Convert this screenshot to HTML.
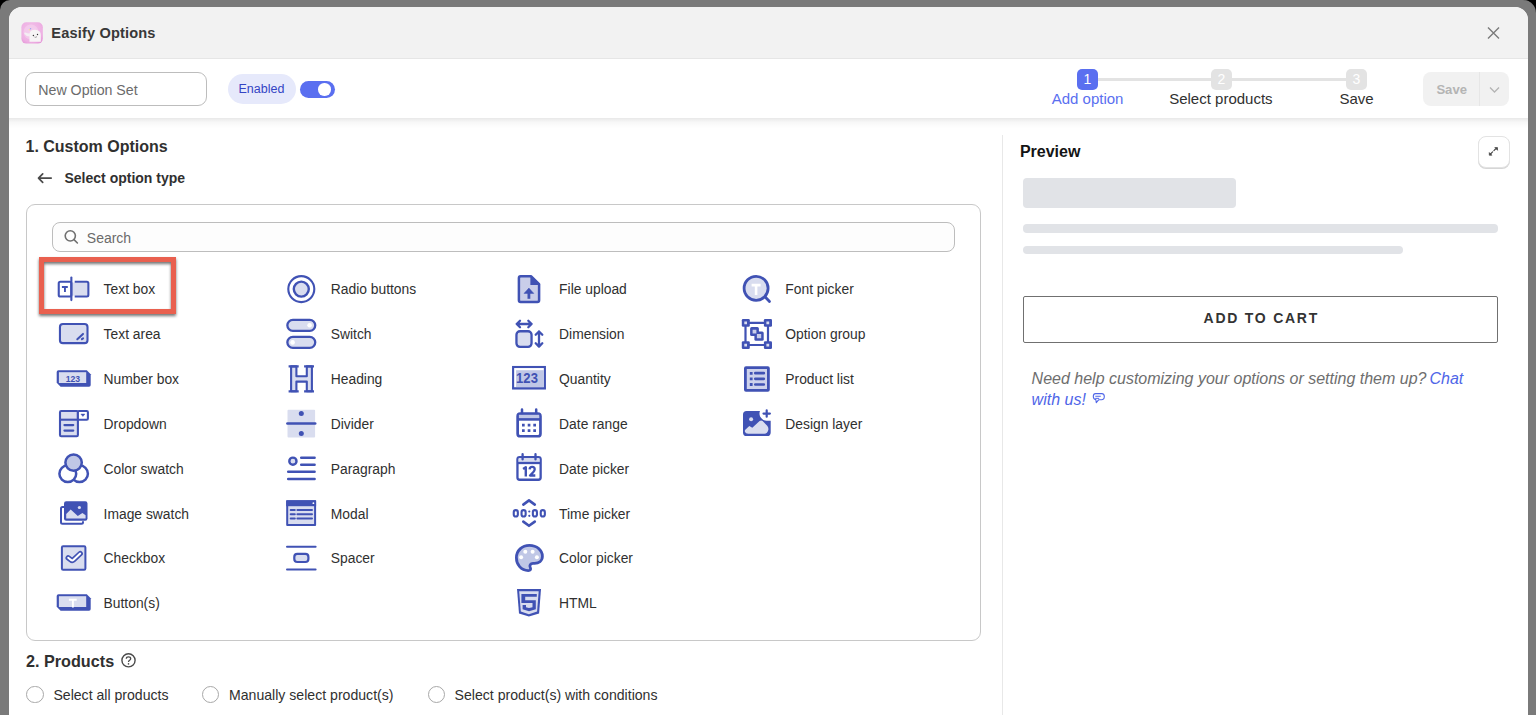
<!DOCTYPE html><html><head><meta charset="utf-8"><style>
html,body{margin:0;padding:0;width:1536px;height:715px;overflow:hidden;background:#000;font-family:"Liberation Sans",sans-serif;}
.t{position:absolute;white-space:nowrap;line-height:1;}
.a{position:absolute;box-sizing:border-box;}
</style></head><body>
<div class="a" style="left:0;top:0;width:1536px;height:715px;background:#7a7a7a;border-radius:10px 13px 0 0;"></div>
<div class="a" style="left:8.5px;top:7px;width:1519px;height:720px;background:#fff;border-radius:13px 13px 0 0;overflow:hidden;"></div>
<div class="a" style="left:8.5px;top:7px;width:1519px;height:52px;background:#f2f2f2;border-radius:13px 13px 0 0;border-bottom:1px solid #e6e6e6;"></div>
<svg class="a" style="left:0;top:0;z-index:1" width="80" height="60"><defs><radialGradient id="lg" cx="0.45" cy="0.4" r="0.7"><stop offset="0" stop-color="#f3c6ec"/><stop offset="0.75" stop-color="#eeb0e3"/><stop offset="1" stop-color="#e596d8"/></radialGradient></defs><rect x="21.4" y="22.2" width="21.4" height="21.4" rx="5" fill="url(#lg)"/><circle cx="31" cy="32" r="7.5" fill="#f5d3ef" opacity="0.6"/><path d="M29.5 41.8 V34 Q30 29.8 35 29.8 Q40.8 30 40.8 35 V41.8 Z" fill="#f7f4f6"/><path d="M29.8 36.5 Q26 36.6 24.3 33.8 Q24 32.4 25.4 32.6 Q27.5 33.6 30 33.5 Z" fill="#f4eef3"/><circle cx="33.4" cy="35.5" r="0.7" fill="#333"/><circle cx="37.5" cy="34.5" r="0.7" fill="#333"/><path d="M34.5 37 Q35.8 37.8 37 36.6" stroke="#444" stroke-width="0.5" fill="none"/><circle cx="30.5" cy="28.8" r="0.8" fill="#9fa8f0"/><circle cx="29.4" cy="29.8" r="0.7" fill="#f3e0a0"/></svg>
<div class="t" style="left:51.30px;top:25.54px;font-size:14.6px;color:#383838;font-weight:bold;font-style:normal;letter-spacing:0.15px;">Easify Options</div>
<svg class="a" style="left:0;top:0" width="1536" height="715"><path d="M1488 27.5 L1499 38.5 M1499 27.5 L1488 38.5" stroke="#7a7a7a" stroke-width="1.4" fill="none"/></svg>
<div class="a" style="left:8.5px;top:60px;width:1519px;height:58px;background:#fff;z-index:2"></div>
<div class="a" style="left:25px;top:72px;width:182px;height:34px;border:1px solid #bdbdbd;border-radius:9px;background:#fff;z-index:3"></div>
<div style="position:absolute;z-index:4;left:0;top:0"><div class="t" style="left:38.30px;top:83.38px;font-size:14.2px;color:#6b6b6b;font-weight:normal;font-style:normal;">New Option Set</div>
<div class="a" style="left:227.7px;top:74px;width:68px;height:30px;border-radius:15px;background:#e6e9fb;"></div>
<div class="t" style="left:238.50px;top:83.22px;font-size:12.5px;color:#3444c4;font-weight:normal;font-style:normal;">Enabled</div>
<div class="a" style="left:300px;top:80.5px;width:34.5px;height:17px;border-radius:9px;background:#5a6ff0;"></div>
<div class="a" style="left:318px;top:83px;width:12.5px;height:12.5px;border-radius:50%;background:#fff;"></div>
<div class="a" style="left:1087px;top:77.5px;width:270px;height:3px;background:#e3e3e3;"></div>
<div class="a" style="left:1077px;top:69px;width:21px;height:21px;border-radius:5px;background:#5a6ff0;color:#fff;font-size:14px;line-height:21px;text-align:center;">1</div>
<div class="a" style="left:1211px;top:69px;width:21px;height:21px;border-radius:5px;background:#e3e3e3;color:#fff;font-size:14px;line-height:21px;text-align:center;">2</div>
<div class="a" style="left:1346px;top:69px;width:21px;height:21px;border-radius:5px;background:#e3e3e3;color:#fff;font-size:14px;line-height:21px;text-align:center;">3</div>
<div class="t" style="left:1051.70px;top:91.30px;font-size:15px;color:#5a6ff0;font-weight:normal;font-style:normal;">Add option</div>
<div class="t" style="left:1169.20px;top:91.30px;font-size:15px;color:#303030;font-weight:normal;font-style:normal;">Select products</div>
<div class="t" style="left:1339.50px;top:91.30px;font-size:15px;color:#303030;font-weight:normal;font-style:normal;">Save</div>
<div class="a" style="left:1423px;top:72px;width:86px;height:34px;border-radius:8px;background:#f1f1f1;"></div>
<div class="a" style="left:1478.5px;top:72px;width:1px;height:34px;background:#e6e6e6;"></div>
<div class="t" style="left:1436.40px;top:82.91px;font-size:13.1px;color:#b4b4b4;font-weight:bold;font-style:normal;">Save</div>
<svg class="a" style="left:1489px;top:86px" width="12" height="8"><path d="M1 1.5 L5.5 6 L10 1.5" stroke="#b4b4b4" stroke-width="1.3" fill="none"/></svg>
</div><div class="a" style="left:8.5px;top:118px;width:1519px;height:10px;background:linear-gradient(rgba(0,0,0,0.09),rgba(0,0,0,0.03) 40%,rgba(0,0,0,0));z-index:2"></div>
<div class="a" style="left:1002px;top:135px;width:1px;height:600px;background:#e8e8e8;"></div>
<div class="t" style="left:25.50px;top:138.56px;font-size:16px;color:#303030;font-weight:bold;font-style:normal;">1. Custom Options</div>
<svg class="a" style="left:36px;top:170px" width="18" height="16"><path d="M2.6 8.1 H15.2 M6.7 3.8 L2.5 8.1 L6.7 12.4" stroke="#4a4a4a" stroke-width="1.7" fill="none" stroke-linecap="round" stroke-linejoin="round"/></svg>
<div class="t" style="left:64.50px;top:171.15px;font-size:14px;color:#303030;font-weight:bold;font-style:normal;">Select option type</div>
<div class="a" style="left:25.5px;top:204px;width:955px;height:437px;border:1px solid #c8c8c8;border-radius:9px;"></div>
<div class="a" style="left:52px;top:222px;width:903px;height:30px;border:1px solid #bdbdbd;border-radius:8px;background:#fdfdfd;"></div>
<svg class="a" style="left:62px;top:228px" width="20" height="20"><circle cx="8.3" cy="7.85" r="5.1" stroke="#707070" stroke-width="1.6" fill="none"/><path d="M12 11.6 L15.4 15" stroke="#707070" stroke-width="1.6" stroke-linecap="round"/></svg>
<div class="t" style="left:86.80px;top:231.15px;font-size:14px;color:#6b6b6b;font-weight:normal;font-style:normal;">Search</div>
<div class="t" style="left:103.60px;top:283.28px;font-size:13.85px;color:#303030;font-weight:normal;font-style:normal;">Text box</div>
<div class="t" style="left:103.60px;top:328.14px;font-size:13.85px;color:#303030;font-weight:normal;font-style:normal;">Text area</div>
<div class="t" style="left:103.60px;top:373.00px;font-size:13.85px;color:#303030;font-weight:normal;font-style:normal;">Number box</div>
<div class="t" style="left:103.60px;top:417.86px;font-size:13.85px;color:#303030;font-weight:normal;font-style:normal;">Dropdown</div>
<div class="t" style="left:103.60px;top:462.72px;font-size:13.85px;color:#303030;font-weight:normal;font-style:normal;">Color swatch</div>
<div class="t" style="left:103.60px;top:507.58px;font-size:13.85px;color:#303030;font-weight:normal;font-style:normal;">Image swatch</div>
<div class="t" style="left:103.60px;top:552.44px;font-size:13.85px;color:#303030;font-weight:normal;font-style:normal;">Checkbox</div>
<div class="t" style="left:103.60px;top:597.30px;font-size:13.85px;color:#303030;font-weight:normal;font-style:normal;">Button(s)</div>
<div class="t" style="left:330.75px;top:283.28px;font-size:13.85px;color:#303030;font-weight:normal;font-style:normal;">Radio buttons</div>
<div class="t" style="left:330.75px;top:328.14px;font-size:13.85px;color:#303030;font-weight:normal;font-style:normal;">Switch</div>
<div class="t" style="left:330.75px;top:373.00px;font-size:13.85px;color:#303030;font-weight:normal;font-style:normal;">Heading</div>
<div class="t" style="left:330.75px;top:417.86px;font-size:13.85px;color:#303030;font-weight:normal;font-style:normal;">Divider</div>
<div class="t" style="left:330.75px;top:462.72px;font-size:13.85px;color:#303030;font-weight:normal;font-style:normal;">Paragraph</div>
<div class="t" style="left:330.75px;top:507.58px;font-size:13.85px;color:#303030;font-weight:normal;font-style:normal;">Modal</div>
<div class="t" style="left:330.75px;top:552.44px;font-size:13.85px;color:#303030;font-weight:normal;font-style:normal;">Spacer</div>
<div class="t" style="left:559.10px;top:283.28px;font-size:13.85px;color:#303030;font-weight:normal;font-style:normal;">File upload</div>
<div class="t" style="left:559.10px;top:328.14px;font-size:13.85px;color:#303030;font-weight:normal;font-style:normal;">Dimension</div>
<div class="t" style="left:559.10px;top:373.00px;font-size:13.85px;color:#303030;font-weight:normal;font-style:normal;">Quantity</div>
<div class="t" style="left:559.10px;top:417.86px;font-size:13.85px;color:#303030;font-weight:normal;font-style:normal;">Date range</div>
<div class="t" style="left:559.10px;top:462.72px;font-size:13.85px;color:#303030;font-weight:normal;font-style:normal;">Date picker</div>
<div class="t" style="left:559.10px;top:507.58px;font-size:13.85px;color:#303030;font-weight:normal;font-style:normal;">Time picker</div>
<div class="t" style="left:559.10px;top:552.44px;font-size:13.85px;color:#303030;font-weight:normal;font-style:normal;">Color picker</div>
<div class="t" style="left:559.10px;top:597.30px;font-size:13.85px;color:#303030;font-weight:normal;font-style:normal;">HTML</div>
<div class="t" style="left:785.30px;top:283.28px;font-size:13.85px;color:#303030;font-weight:normal;font-style:normal;">Font picker</div>
<div class="t" style="left:785.30px;top:328.14px;font-size:13.85px;color:#303030;font-weight:normal;font-style:normal;">Option group</div>
<div class="t" style="left:785.30px;top:373.00px;font-size:13.85px;color:#303030;font-weight:normal;font-style:normal;">Product list</div>
<div class="t" style="left:785.30px;top:417.86px;font-size:13.85px;color:#303030;font-weight:normal;font-style:normal;">Design layer</div>
<div class="a" style="left:39px;top:257px;width:137px;height:56.5px;border:5.3px solid #e9604f;filter:drop-shadow(0 2px 1.5px rgba(0,0,0,0.55));"></div>
<div class="t" style="left:26.00px;top:652.79px;font-size:16.2px;color:#303030;font-weight:bold;font-style:normal;">2. Products</div>
<svg class="a" style="left:119px;top:651px" width="20" height="20"><circle cx="9.5" cy="9.3" r="6.6" stroke="#4a4a4a" stroke-width="1.4" fill="none"/><path d="M7.3 7.7 C7.3 5.3 11.7 5.3 11.7 7.7 C11.7 9.3 9.5 9.2 9.5 10.9" stroke="#4a4a4a" stroke-width="1.3" fill="none"/><circle cx="9.5" cy="12.9" r="0.8" fill="#4a4a4a"/></svg>
<div class="a" style="left:26.4px;top:686.2px;width:17.3px;height:17.3px;border-radius:50%;border:1px solid #a8a8a8;"></div>
<div class="t" style="left:53.40px;top:687.66px;font-size:14.1px;color:#303030;font-weight:normal;font-style:normal;">Select all products</div>
<div class="a" style="left:202.2px;top:686.2px;width:17.3px;height:17.3px;border-radius:50%;border:1px solid #a8a8a8;"></div>
<div class="t" style="left:229.00px;top:687.66px;font-size:14.1px;color:#303030;font-weight:normal;font-style:normal;">Manually select product(s)</div>
<div class="a" style="left:428px;top:686.2px;width:17.3px;height:17.3px;border-radius:50%;border:1px solid #a8a8a8;"></div>
<div class="t" style="left:454.60px;top:687.66px;font-size:14.1px;color:#303030;font-weight:normal;font-style:normal;">Select product(s) with conditions</div>
<div class="t" style="left:1019.90px;top:144.06px;font-size:16px;color:#141414;font-weight:bold;font-style:normal;">Preview</div>
<div class="a" style="left:1477.5px;top:135.5px;width:32px;height:32.5px;border:1px solid #e3e3e3;border-radius:8px;box-shadow:0 1px 0 #d6d6d6;background:#fff"></div>
<svg class="a" style="left:1483px;top:141px" width="20" height="20"><path d="M7.5 13 L9.6 10.9" stroke="#444" stroke-width="1.1" stroke-linecap="round"/><path d="M10.9 9.6 L12.5 8" stroke="#444" stroke-width="1.1" stroke-linecap="round"/><path d="M6.3 11.6 V14.2 H8.9 Z" fill="#444" stroke="#444" stroke-width="0.7" stroke-linejoin="round"/><path d="M14.5 9.3 V6.6 H11.8 Z" fill="#444" stroke="#444" stroke-width="0.7" stroke-linejoin="round"/></svg>
<div class="a" style="left:1023px;top:178px;width:213px;height:30px;border-radius:4px;background:#e1e3e7;"></div>
<div class="a" style="left:1023px;top:224px;width:475px;height:8.5px;border-radius:4px;background:#e1e3e7;"></div>
<div class="a" style="left:1023px;top:245.5px;width:380px;height:8.5px;border-radius:4px;background:#e1e3e7;"></div>
<div class="a" style="left:1023px;top:295.5px;width:475px;height:47px;border:1.5px solid #707070;border-radius:2px;"></div>
<div class="t" style="left:1203.60px;top:311.05px;font-size:14px;color:#333;font-weight:bold;font-style:normal;letter-spacing:1.75px;">ADD TO CART</div>
<div class="t" style="left:1031.60px;top:370.66px;font-size:16px;color:#6e6e6e;font-weight:normal;font-style:italic;">Need help customizing your options or setting them up?<span style="color:#4f66e8;margin-left:3px">Chat</span></div>
<div class="t" style="left:1031.60px;top:391.86px;font-size:16px;color:#6e6e6e;font-weight:normal;font-style:italic;"><span style="color:#4f66e8">with us!</span></div>
<svg class="a" style="left:0;top:0" width="1536" height="715"><path d="M1095.6 393.6 H1101.8 Q1104.3 393.6 1104.3 396.6 Q1104.3 399.8 1101.5 399.8 H1098.6 L1096.3 402.6 L1095.8 399.6 Q1093.3 399.1 1093.3 396.5 Q1093.3 393.6 1095.6 393.6 Z" stroke="#4f66e8" stroke-width="1.1" fill="none" stroke-linejoin="round"/><path d="M1095.7 396.25 H1100.4 M1095.6 398.35 H1098.8" stroke="#4f66e8" stroke-width="1" stroke-linecap="round"/></svg>
<svg class="a" style="left:0;top:0" width="1536" height="715" viewBox="0 0 1536 715"><g fill="none" stroke="#4052b4" stroke-width="2" stroke-linejoin="round">
<!-- Text box -->
<rect x="72.4" y="282.6" width="15" height="13" fill="#d9ddef" stroke="none"/>
<path d="M74.7 281.75 H86.9 Q88.35 281.75 88.35 283.2 V295.05 Q88.35 296.5 86.9 296.5 H74.7" stroke-width="2.1"/>
<rect x="58.75" y="281.75" width="12.6" height="14.75" rx="1.6" stroke-width="2.1"/>
<path d="M71.35 277.6 V300.1" stroke-width="2.1" stroke-linecap="round"/>
<path d="M61.9 287 H67.8 M64.95 287 V292" stroke-width="1.9" stroke-linejoin="miter"/>
<!-- Text area -->
<rect x="59.95" y="324.05" width="27.55" height="19.1" rx="3" fill="#d9ddef" stroke-width="2.1"/>
<path d="M77.3 339.3 L83 333.9" stroke-width="2" stroke-linecap="round"/>
<path d="M81.9 339.1 L83.1 338.3" stroke-width="2" stroke-linecap="round"/>
<!-- Number box -->
<path d="M58.5 370.3 H86.8 L90.7 374.2 V385 Q90.7 386.7 89 386.7 H60.6 L56.7 382.8 V372.1 Q56.7 370.3 58.5 370.3 Z" fill="#4052b4" stroke="none"/>
<rect x="58.9" y="372.2" width="27.3" height="10.8" fill="#d9ddef" stroke="none"/>
<text x="72.9" y="382" font-family="Liberation Sans" font-weight="bold" font-size="8.6" fill="#4052b4" stroke="none" text-anchor="middle">123</text>
<!-- Dropdown -->
<rect x="60" y="411" width="17.9" height="25.3" rx="1.2" fill="#d9ddef" stroke-width="2.1"/>
<rect x="77.9" y="411" width="10" height="8.7" rx="1.2" fill="#fff" stroke-width="2.1"/>
<path d="M60 419.7 H77.9" stroke-width="2.1"/>
<path d="M80.9 414.1 H84.9 L82.9 416.4 Z" fill="#4052b4" stroke="#4052b4" stroke-width="0.5"/>
<path d="M64.4 425.1 H73.3 M64.4 430.6 H73.3" stroke-width="2.1" stroke-linecap="round"/>
<!-- Color swatch -->
<circle cx="79.5" cy="473.7" r="8.4" fill="#fff" stroke-width="2.5"/>
<circle cx="67.8" cy="473.7" r="8.4" fill="#fff" stroke-width="2.5"/>
<circle cx="73.6" cy="462.6" r="8.2" fill="#c0c7e6" stroke-width="2.5"/>
<!-- Image swatch -->
<path d="M64 507 H62.5 Q61 507 61 508.5 V522.2 Q61 523.7 62.5 523.7 H81.5 Q83 523.7 83 522.2 V521.2" stroke-width="2"/>
<rect x="64" y="501.2" width="23.5" height="19.6" rx="2.2" fill="#4052b4" stroke="none"/>
<path d="M66.2 514 L70.7 509.6 L77.8 516 L82.4 512.9 L85.6 515.2 V518.6 H66.2 Z" fill="#d9ddef" stroke="none"/>
<circle cx="79.4" cy="507.5" r="1.6" fill="#d9ddef" stroke="none"/>
<!-- Checkbox -->
<rect x="61.9" y="546.3" width="23.5" height="23.5" rx="1.2" fill="#d9ddef"/>
<path d="M68.2 557.8 L70.9 559.9 Q72.3 561 73.6 559.8 L80.2 553.6" stroke-width="5.4" stroke-linecap="round"/>
<path d="M68.2 557.8 L70.9 559.9 Q72.3 561 73.6 559.8 L80.2 553.6" stroke="#fff" stroke-width="2" stroke-linecap="round"/>
<!-- Button(s) -->
<path d="M58.5 594.3 H86.8 L90.7 598.2 V609 Q90.7 610.7 89 610.7 H60.6 L56.7 606.8 V596.1 Q56.7 594.3 58.5 594.3 Z" fill="#4052b4" stroke="none"/>
<rect x="58.9" y="596.2" width="27.3" height="10.8" fill="#d9ddef" stroke="none"/>
<path d="M68.9 599.8 H76.7 M72.9 599 V607.6" stroke="#fff" stroke-width="1.9"/>

<!-- Radio -->
<circle cx="301.3" cy="289.1" r="13" stroke-width="2.1"/>
<circle cx="301.3" cy="289.1" r="7.5" fill="#d9ddef" stroke-width="2.4"/>
<!-- Switch -->
<rect x="287.35" y="319.85" width="27.9" height="11" rx="5.5" fill="#d9ddef" stroke-width="2.3"/>
<circle cx="309.6" cy="325.3" r="2.3" fill="#fff" stroke="none"/>
<rect x="287.35" y="336.85" width="27.9" height="11" rx="5.5" fill="#d9ddef" stroke-width="2.3"/>
<circle cx="292.6" cy="342.4" r="2.3" fill="#fff" stroke="none"/>
<!-- Heading -->
<path d="M291.1 366.4 V391.3 H296.4 V381.6 H306.8 V391.3 H311.9 V366.4 H306.8 V376.2 H296.4 V366.4 Z" fill="#d9ddef" stroke-width="2.1"/>
<path d="M288.6 365.3 H298.7 V367.5 H288.6 Z M304.1 365.3 H314 V367.5 H304.1 Z M288.6 390.2 H298.7 V392.4 H288.6 Z M304.1 390.2 H314 V392.4 H304.1 Z" fill="#4052b4" stroke="none"/>
<!-- Divider -->
<rect x="287.5" y="409.8" width="27.6" height="27.8" rx="1" fill="#d9ddef" stroke="none"/>
<path d="M287.4 423.5 H315.2" stroke-width="2.6" stroke-linecap="round"/>
<circle cx="301.3" cy="413.4" r="2.5" fill="#4052b4" stroke="none"/>
<circle cx="301.3" cy="433.6" r="2.5" fill="#4052b4" stroke="none"/>
<!-- Paragraph -->
<circle cx="292.9" cy="461.2" r="3.6" fill="#d9ddef" stroke-width="2.4"/>
<path d="M301.2 457.8 H314.6 M301.2 464.8 H314.6 M288.2 471.8 H314.6 M288.2 479 H314.6" stroke-width="2.5" stroke-linecap="round"/>
<!-- Modal -->
<rect x="287.2" y="501.3" width="27.9" height="23.7" fill="#d9ddef" stroke-width="2"/>
<rect x="286.2" y="500.3" width="29.9" height="5.9" fill="#4052b4" stroke="none"/>
<circle cx="313.4" cy="503.2" r="0.9" fill="#fff" stroke="none"/>
<path d="M290.7 510.1 H294.8 M297.4 510.1 H312 M290.7 514.3 H294.8 M297.4 514.3 H312 M290.7 518.5 H294.8 M297.4 518.5 H312" stroke-width="2" stroke-linecap="round"/>
<!-- Spacer -->
<path d="M287 546.7 H315.6" stroke-width="2" stroke-linecap="round"/>
<rect x="294.3" y="553.9" width="14.1" height="8.1" rx="3" fill="#d9ddef" stroke-width="2.2"/>
<path d="M287 569.4 H315.6" stroke-width="2" stroke-linecap="round"/>

<!-- File upload -->
<path d="M520.6 276.3 H531.2 L539.1 284.2 V300.2 Q539.1 301.9 537.4 301.9 H520.6 Q518.9 301.9 518.9 300.2 V278 Q518.9 276.3 520.6 276.3 Z" fill="#c9cee9" stroke-width="2.5"/>
<path d="M530.4 275.2 L540.3 285.1 H530.4 Z" fill="#4052b4" stroke="none"/>
<path d="M524 293.4 L528.9 288.1 L533.8 293.4 Z" fill="#4052b4" stroke="#4052b4" stroke-width="0.5"/>
<path d="M528.9 292.5 V298.8" stroke-width="2.8"/>
<!-- Dimension -->
<path d="M516.7 324 H531.6 M520 320.7 L516.7 324 L520 327.3 M528.3 320.7 L531.6 324 L528.3 327.3" stroke-width="2.3" stroke-linecap="round"/>
<rect x="516.45" y="331.25" width="15.1" height="15.6" rx="3.5" fill="#d9ddef" stroke-width="2.3"/>
<path d="M539 331.5 V346.6 M535.7 334.8 L539 331.5 L542.3 334.8 M535.7 343.3 L539 346.6 L542.3 343.3" stroke-width="2.3" stroke-linecap="round"/>
<!-- Quantity -->
<rect x="513.1" y="367" width="31.8" height="21.5" fill="#fff" stroke-width="2.1" stroke-linejoin="miter"/>
<rect x="516.1" y="370.2" width="27.8" height="16.8" fill="#c0c7e6" stroke="none"/>
<path d="M512.1 388 H545.9" stroke-width="1.2"/>
<text x="516.1" y="382.8" font-family="Liberation Sans" font-weight="bold" font-size="14.2" textLength="21.8" lengthAdjust="spacingAndGlyphs" fill="#4052b4" stroke="none">123</text>
<!-- Date range -->
<rect x="517.65" y="413.55" width="22.8" height="22.7" rx="2.6" fill="#fff" stroke-width="2.7"/>
<rect x="518.9" y="414.8" width="20.3" height="3.4" fill="#c0c7e6" stroke="none"/>
<path d="M517.65 419.4 H540.45" stroke-width="2.6"/>
<path d="M522 409.4 V413 M536.2 409.4 V413" stroke-width="2.5" stroke-linecap="round"/>
<path d="M522 423.8 h2.7 v2.7 h-2.7 Z M527.7 423.8 h2.7 v2.7 h-2.7 Z M533.3 423.8 h2.7 v2.7 h-2.7 Z M522 429.3 h2.7 v2.7 h-2.7 Z M527.7 429.3 h2.7 v2.7 h-2.7 Z M533.3 429.3 h2.7 v2.7 h-2.7 Z" fill="#4052b4" stroke="none"/>
<!-- Date picker -->
<rect x="517.45" y="457.15" width="23.2" height="22.6" rx="2.2" fill="#fff" stroke-width="2.3"/>
<rect x="518.6" y="458.3" width="20.9" height="3.8" fill="#d9ddef" stroke="none"/>
<path d="M517.45 463 H540.65" stroke-width="2.3"/>
<path d="M522.6 454.2 V459.4 M535.5 454.2 V459.4" stroke-width="2.3" stroke-linecap="round"/>
<path d="M523.1 469.1 L525.8 467.2 V476.6" stroke-width="2.4" stroke-linejoin="round"/>
<path d="M529.6 469.4 Q529.7 466.8 532.2 466.8 Q534.7 466.8 534.7 469.2 Q534.7 470.6 533.2 472.2 L530 475.5 H535.3" stroke-width="2.3" stroke-linejoin="round"/>
<!-- Time picker -->
<path d="M523.3 504.6 L529 500.4 L534.8 504.6" stroke-width="2.6" stroke-linecap="round"/>
<path d="M523.3 521.6 L529 525.8 L534.8 521.6" stroke-width="2.6" stroke-linecap="round"/>
<rect x="513.75" y="510.15" width="4.1" height="6.4" rx="2.05" stroke-width="2.1"/>
<rect x="521.55" y="510.15" width="4.1" height="6.4" rx="2.05" stroke-width="2.1"/>
<rect x="532.85" y="510.15" width="4.1" height="6.4" rx="2.05" stroke-width="2.1"/>
<rect x="540.75" y="510.15" width="4.1" height="6.4" rx="2.05" stroke-width="2.1"/>
<circle cx="529.3" cy="511.5" r="1.1" fill="#4052b4" stroke="none"/>
<circle cx="529.3" cy="515.8" r="1.1" fill="#4052b4" stroke="none"/>
<!-- Color picker -->
<path d="M529.4 545.4 C537 545.4 542.4 550.3 542.4 556.3 C542.4 561 538.6 563.3 534.6 563.3 H533 C530.3 563.3 529.2 565.6 530.3 567.6 C531.1 569.4 530.4 570.6 528.3 570.6 C521 570.4 516.4 564.5 516.4 557.8 C516.4 550.5 522 545.4 529.4 545.4 Z" fill="#c0c7e6" stroke-width="2.8"/>
<circle cx="525.3" cy="551.8" r="2" fill="#fff" stroke="none"/>
<circle cx="532.6" cy="551.8" r="2" fill="#fff" stroke="none"/>
<circle cx="521.1" cy="557.3" r="2" fill="#fff" stroke="none"/>
<circle cx="536.9" cy="557.3" r="2" fill="#fff" stroke="none"/>
<!-- HTML -->
<path d="M517 589 H541 L539.1 613.4 L528.9 616.5 L519 613.4 Z" fill="#4052b4" stroke="none"/>
<path d="M519.2 591.2 H538.7 L537.1 611.6 L528.9 614.2 L520.8 611.6 Z" fill="#d9ddef" stroke="none"/>
<path d="M521.4 594 H536.8 V596.8 H525.2 V600.2 H535.8 V609.2 L529 611.2 L522.6 609.2 V605 H526 V607.2 L529 608.1 L532.5 607.2 V602.9 H521.4 Z" fill="#4052b4" stroke="none"/>

<!-- Font picker -->
<circle cx="756.1" cy="288.3" r="12" fill="#d9ddef" stroke-width="2.8"/>
<path d="M765.2 297 L769.5 301.4" stroke-width="2.8" stroke-linecap="round"/>
<path d="M751.6 285.1 H760.6 M756.1 285.1 V295" stroke="#fff" stroke-width="2.6"/>
<!-- Option group -->
<path d="M745.5 322.9 V345 H768 V322.9 Z" stroke-width="2.2"/>
<rect x="741.8" y="319" width="8" height="7.8" rx="1.2" fill="#4052b4" stroke="none"/>
<rect x="763.9" y="319" width="8.1" height="7.8" rx="1.2" fill="#4052b4" stroke="none"/>
<rect x="741.8" y="341.2" width="8" height="7.8" rx="1.2" fill="#4052b4" stroke="none"/>
<rect x="763.9" y="341.2" width="8.1" height="7.8" rx="1.2" fill="#4052b4" stroke="none"/>
<path d="M744.3 321.5 h2.7 v2.8 h-2.7 Z M766.4 321.5 h2.8 v2.8 h-2.8 Z M744.3 343.7 h2.7 v2.8 h-2.7 Z M766.4 343.7 h2.8 v2.8 h-2.8 Z" fill="#d9ddef" stroke="none"/>
<rect x="750.1" y="327.1" width="8.8" height="8.8" rx="1.5" fill="#4052b4" stroke="none"/>
<rect x="754.4" y="331.4" width="9.3" height="9.3" rx="1.5" fill="#4052b4" stroke="none"/>
<path d="M752.6 329.8 h3.8 v3.6 h-3.8 Z M756.9 334.1 h4.3 v4.1 h-4.3 Z" fill="#c9cee9" stroke="none"/>
<!-- Product list -->
<rect x="745.4" y="367.6" width="23" height="22.7" rx="0.6" fill="#cdd2ec" stroke-width="2.8"/>
<path d="M749.8 371.9 h2.8 v2.8 h-2.8 Z M749.8 377.5 h2.8 v2.8 h-2.8 Z M749.8 383.1 h2.8 v2.8 h-2.8 Z" fill="#4052b4" stroke="none"/>
<path d="M755.3 373.2 H763.8 M755.3 378.8 H763.8 M755.3 384.5 H763.8" stroke-width="2.7" stroke-linecap="round"/>
<!-- Design layer -->
<path d="M746.6 411 H759.95 A7.2 7.2 0 0 0 766.7 420.7 H770.7 V432.4 Q770.7 436 767.1 436 H746.6 Q743 436 743 432.4 V414.6 Q743 411 746.6 411 Z" fill="#4052b4" stroke="none"/>
<path d="M745.3 429.8 L749.3 425.9 L752.3 427.8 L759.6 421 Q761.1 419.8 762.6 421 L767.2 425.7 Q768.8 427.6 768.3 430 Q767.4 433.7 764.5 433.7 H748.2 Q745.6 433.7 744.9 431.8 Q744.6 430.6 745.3 429.8 Z" fill="#d9ddef" stroke="none"/>
<circle cx="751.1" cy="419.3" r="2" fill="#d9ddef" stroke="none"/>
<path d="M766.7 410.4 V416.7 M763.5 413.55 H769.9" stroke-width="2.2" stroke-linecap="round"/>
</g>
</svg>
</body></html>
